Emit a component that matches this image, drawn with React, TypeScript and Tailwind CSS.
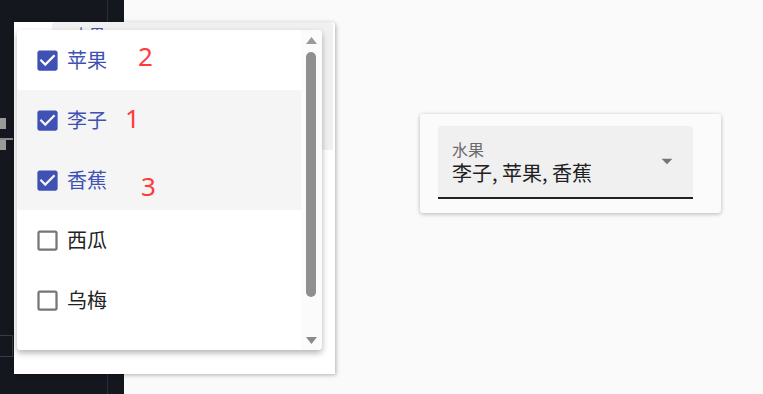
import React from "react";

const CJK = { fontFamily: '"Noto Sans CJK SC", "Noto Sans", sans-serif' };
const NUM = { fontFamily: '"Noto Sans", sans-serif' };

function CheckedIcon() {
  return (
    <svg viewBox="0 0 24 24" className="w-[27px] h-[27px] shrink-0" fill="#3f51b5">
      <path d="M19 3H5c-1.11 0-2 .9-2 2v14c0 1.1.89 2 2 2h14c1.11 0 2-.9 2-2V5c0-1.1-.89-2-2-2zm-9 14l-5-5 1.41-1.41L10 14.17l7.59-7.59L19 8l-9 9z" />
    </svg>
  );
}

function UncheckedIcon() {
  return (
    <svg viewBox="0 0 24 24" className="w-[27px] h-[27px] shrink-0" fill="#757575">
      <path d="M19 5v14H5V5h14m0-2H5c-1.1 0-2 .9-2 2v14c0 1.1.9 2 2 2h14c1.1 0 2-.9 2-2V5c0-1.1-.9-2-2-2z" />
    </svg>
  );
}

const items = [
  { label: "苹果", checked: true, hl: false },
  { label: "李子", checked: true, hl: true },
  { label: "香蕉", checked: true, hl: true },
  { label: "西瓜", checked: false, hl: false },
  { label: "乌梅", checked: false, hl: false },
  { label: "", checked: false, hl: false },
];

export default function App() {
  return (
    <div className="relative flex w-[763px] h-[394px] overflow-hidden bg-[#fafafa]" style={CJK}>
      {/* left dark strip */}
      <div className="relative w-[124px] h-full shrink-0 bg-[#15171f]">
        <div className="absolute left-[107px] top-0 bottom-0 w-px bg-[#2c2f37]" />
        <div className="absolute left-0 top-[118px] w-[6px] h-[11px] bg-[#9a9a9a]" />
        <div className="absolute left-0 top-[138px] w-[13px] h-[2px] bg-[#8a8a8a]" />
        <div className="absolute left-0 top-[140px] w-[6px] h-[10px] bg-[#9a9a9a]" />
        <div className="absolute left-[-2px] top-[335px] w-[15px] h-[22px] border border-[#3a3c44]" />
      </div>

      {/* right card */}
      <div className="flex-1">
        <div className="ml-[296px] mt-[114px] w-[301px] h-[99px] bg-[#fbfbfb] rounded-[3px] shadow-[0_1px_4px_rgba(0,0,0,0.28)] pt-[12px] pl-[18px]">
          <div className="flex w-[255px] h-[73px] bg-[#f0f0f0] rounded-t-[4px] border-b-2 border-[#212121] pl-[14px] pr-[13px]">
            <div className="flex flex-col pt-[15px]">
              <div className="text-[16px] leading-[16px] text-[#6b6b6b]">水果</div>
              <div className="mt-[6px] text-[20px] leading-[20px] text-[#212121] whitespace-nowrap">李子, 苹果, 香蕉</div>
            </div>
            <svg viewBox="0 0 24 24" className="ml-auto mt-[22px] w-[26px] h-[26px] shrink-0" fill="#757575">
              <path d="M7 10l5 5 5-5z" />
            </svg>
          </div>
        </div>
      </div>

      {/* popover panel behind menu */}
      <div className="absolute left-[14px] top-[22px] w-[321px] h-[352px] bg-white rounded-tr-[4px] shadow-[1px_1px_4px_rgba(0,0,0,0.3)]">
        <div className="ml-[38px] w-[281px] h-[128px] bg-[#f0f0f0] rounded-t-[4px] pl-[21px] pt-[4px]">
          <div className="text-[16px] leading-[16px] text-[#3f51b5]">水果</div>
        </div>
      </div>

      {/* dropdown menu */}
      <div className="absolute left-[17px] top-[30px] w-[305px] h-[320px] bg-white rounded-[4px] shadow-[0_3px_6px_rgba(0,0,0,0.3)] overflow-hidden flex">
        <div className="w-[284px] flex flex-col">
          {items.map((it, i) => (
            <div
              key={i}
              className={"flex items-center h-[60px] shrink-0 pl-[17px] " + (it.hl ? "bg-[#f5f5f5]" : "bg-white")}
            >
              {it.checked ? <CheckedIcon /> : <UncheckedIcon />}
              {it.label && (
                <span className={"ml-[6px] text-[20px] leading-[20px] " + (it.checked ? "text-[#3f51b5]" : "text-[#222222]")}>
                  {it.label}
                </span>
              )}
            </div>
          ))}
        </div>

        {/* annotation numbers */}
        <span className="absolute left-[121px] top-[13px] text-[26px] leading-none text-[#ff3b3b]" style={NUM}>2</span>
        <span className="absolute left-[108px] top-[75px] text-[26px] leading-none text-[#ff3b3b]" style={NUM}>1</span>
        <span className="absolute left-[124px] top-[143px] text-[26px] leading-none text-[#ff3b3b]" style={NUM}>3</span>

        {/* scrollbar */}
        <div className="flex flex-col items-start w-[21px] h-full bg-[#fbfbfb] pl-[5px] pt-[7px]">
          <svg viewBox="0 0 11 7" className="w-[11px] h-[7px]" fill="#9a9a9a">
            <path d="M5.5 0L11 7H0z" />
          </svg>
          <div className="mt-[8px] w-[10px] h-[245px] rounded-full bg-[#8f8f8f]" />
          <svg viewBox="0 0 11 7" className="mt-[40px] w-[11px] h-[7px]" fill="#8a8a8a">
            <path d="M0 0H11L5.5 7z" />
          </svg>
        </div>
      </div>
    </div>
  );
}
